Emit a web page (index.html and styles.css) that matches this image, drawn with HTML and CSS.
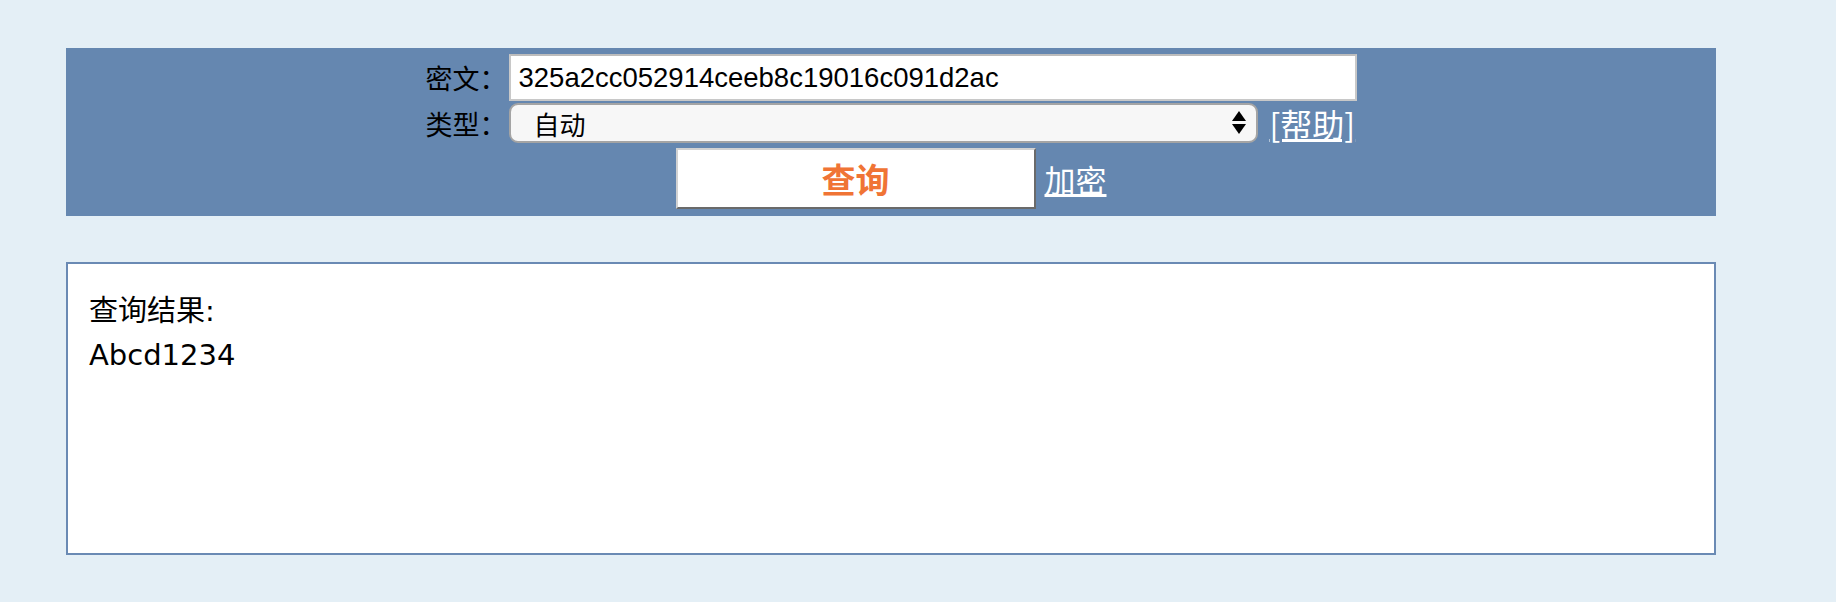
FILE: index.html
```html
<!DOCTYPE html>
<html lang="zh-CN">
<head>
<meta charset="utf-8">
<title>查询</title>
<link rel="stylesheet" href="styles.css">
</head>
<body>
<div class="page">
  <form class="query-bar">
    <div class="fields">
      <label class="field-label" for="cipher">密文<span class="colon">：</span></label>
      <div class="field">
        <input id="cipher" class="cipher-input" type="text" value="325a2cc052914ceeb8c19016c091d2ac">
      </div>
      <label class="field-label" for="type">类型<span class="colon">：</span></label>
      <div class="field field-row">
        <span class="select-wrap">
          <select id="type" class="type-select"><option>自动</option></select>
          <svg class="select-arrows" width="14" height="24" viewBox="0 0 14 24" aria-hidden="true">
            <path d="M7 0 L14 10 L0 10 Z" fill="#000"/>
            <path d="M0 13 L14 13 L7 23 Z" fill="#000"/>
          </svg>
        </span>
        <a class="help-link" href="#">[帮助]</a>
      </div>
    </div>
    <div class="actions">
      <button class="query-btn" type="button">查询</button>
      <a class="encrypt-link" href="#">加密</a>
    </div>
  </form>

  <div class="result">
    <div class="result-line">查询结果:</div>
    <div class="result-line">Abcd1234</div>
  </div>
</div>
</body>
</html>
```

FILE: styles.css
```css
html, body {
  margin: 0;
  padding: 0;
  background: #e4eff6;
}

body {
  font-family: "Liberation Sans", "Noto Sans CJK SC", sans-serif;
  color: #000;
}

.page {
  width: 1650px;
  margin-left: 66px;
  padding-top: 48px;
}

.query-bar {
  margin: 0;
  background: #6587b0;
  padding: 6px 0 7px;
  display: flex;
  flex-direction: column;
  align-items: center;
}

.fields {
  display: grid;
  grid-template-columns: auto auto;
  column-gap: 2px;
  row-gap: 2px;
  align-items: center;
}

.field-label {
  font-family: "Noto Sans CJK SC", sans-serif;
  font-size: 27px;
  text-align: right;
  white-space: nowrap;
}

.colon {
  font-family: "Noto Sans CJK TC", sans-serif;
}

.field-row {
  display: flex;
  align-items: center;
  gap: 12px;
}

.cipher-input {
  box-sizing: border-box;
  width: 848px;
  height: 47px;
  margin: 0;
  border: 2px solid #c8c8c8;
  border-top-color: #bcbcbc;
  background: #fff;
  padding: 0 8px;
  font-family: "Liberation Sans", sans-serif;
  font-size: 27.5px;
  color: #000;
  outline: none;
}

.select-wrap {
  position: relative;
  display: inline-block;
  width: 749px;
  height: 40px;
}

.type-select {
  box-sizing: border-box;
  width: 100%;
  height: 40px;
  margin: 0;
  -webkit-appearance: none;
  appearance: none;
  border: 2px solid #a4a4a4;
  border-radius: 9px;
  background: #f7f7f7;
  padding: 0 0 0 23px;
  font-family: "Noto Sans CJK SC", sans-serif;
  font-size: 26px;
  color: #000;
  outline: none;
}

.select-arrows {
  position: absolute;
  right: 12px;
  top: 8px;
  pointer-events: none;
}

.help-link,
.encrypt-link {
  font-family: "Noto Sans CJK SC", sans-serif;
  font-size: 32px;
  color: #fff;
  text-decoration: underline;
  text-underline-offset: 2px;
  white-space: nowrap;
  line-height: 1;
}

.encrypt-link {
  font-size: 31px;
}

.actions {
  margin-top: 5px;
  display: flex;
  align-items: center;
  gap: 9px;
}

.query-btn {
  box-sizing: border-box;
  width: 360px;
  height: 61px;
  margin: 0;
  padding: 0;
  background: #fff;
  border: 2px solid;
  border-color: #d2d2d2 #6a6a6a #6a6a6a #d2d2d2;
  font-family: "Noto Sans CJK SC", sans-serif;
  font-weight: bold;
  font-size: 34px;
  color: #f07435;
  cursor: pointer;
}

.result {
  box-sizing: border-box;
  margin-top: 46px;
  height: 293px;
  background: #fff;
  border: 2px solid #6a8ab4;
  padding: 25px 21px;
  font-family: "DejaVu Sans", "Noto Sans CJK SC", sans-serif;
  font-size: 29px;
  line-height: 44px;
}

.result-line {
  white-space: nowrap;
}
```
